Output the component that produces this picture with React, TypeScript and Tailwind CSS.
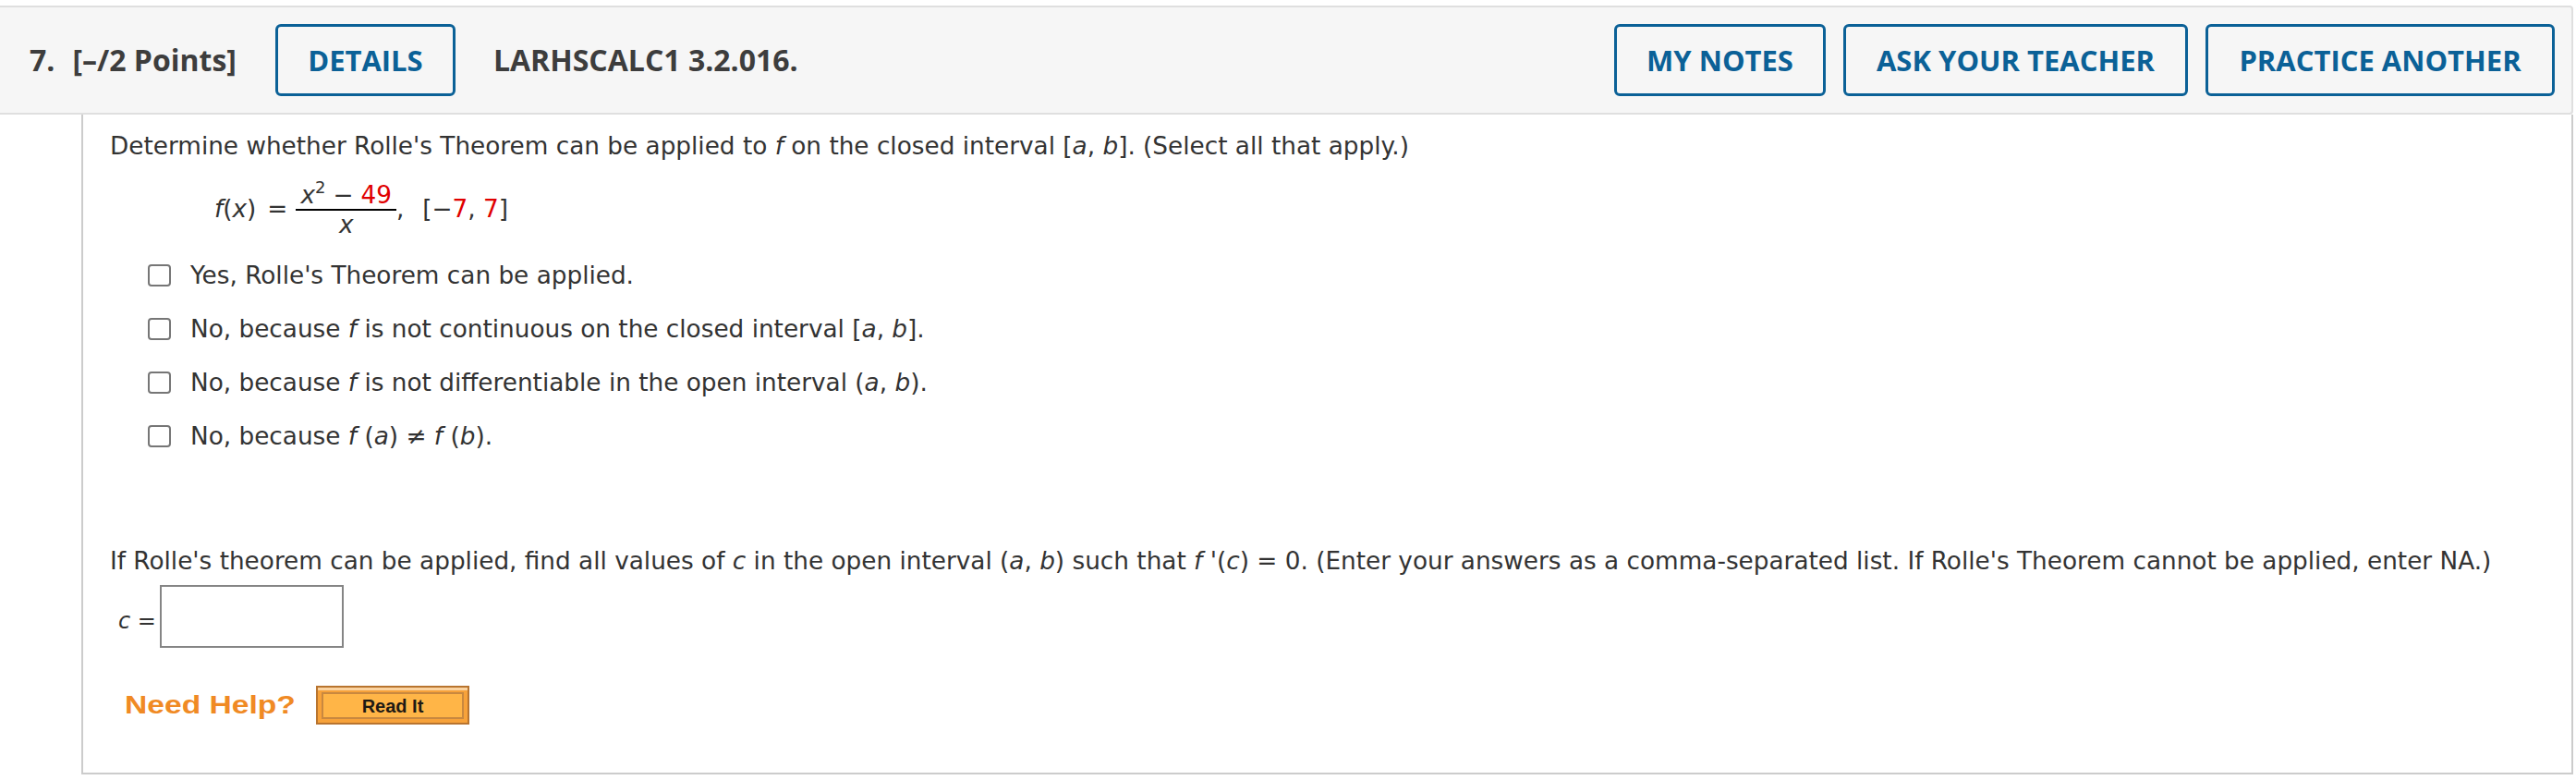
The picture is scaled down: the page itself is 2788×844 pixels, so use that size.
import React from "react";

const body = "font-['DejaVu_Sans',Verdana,sans-serif] text-[26.3px] text-[#333333]";

function Box() {
  return (
    <span className="inline-block w-[25px] h-[24px] border-2 border-[#767676] rounded-[4px] bg-white shrink-0" />
  );
}

function Option({ children }: { children: React.ReactNode }) {
  return (
    <div className="flex items-center h-[34px] ml-[41px]">
      <Box />
      <span className={`${body} leading-[34px] ml-[21px] whitespace-nowrap`}>{children}</span>
    </div>
  );
}

function HBtn({ children, w }: { children: React.ReactNode; w: string }) {
  return (
    <div
      className={`${w} h-[78px] border-[3px] border-[#0b6197] rounded-[6px] flex items-center justify-center text-[#0b6197] font-['Open_Sans',sans-serif] font-bold text-[31px]`}
    >
      {children}
    </div>
  );
}

export default function App() {
  return (
    <div className="w-[2788px] h-[844px] bg-white pt-[6px] overflow-hidden">
      {/* Header */}
      <div className="w-[2785px] h-[118px] bg-[#f6f6f6] border-2 border-l-0 border-[#dfdfdf] rounded-r-[4px] flex items-center">
        <span className="ml-[32px] font-['Open_Sans',sans-serif] font-bold text-[32px] text-[#3d3d3d]">7.</span>
        <span className="ml-[19px] font-['Open_Sans',sans-serif] font-bold text-[32px] text-[#3d3d3d]">[–/2 Points]</span>
        <div className="ml-[42px]">
          <HBtn w="w-[195px]">DETAILS</HBtn>
        </div>
        <span className="ml-[41px] font-['Open_Sans',sans-serif] font-bold text-[32px] text-[#3d3d3d]">LARHSCALC1 3.2.016.</span>
        <div className="ml-auto mr-[18px] flex gap-[19px]">
          <HBtn w="w-[229px]">MY NOTES</HBtn>
          <HBtn w="w-[373px]">ASK YOUR TEACHER</HBtn>
          <HBtn w="w-[378px]">PRACTICE ANOTHER</HBtn>
        </div>
      </div>

      {/* Content */}
      <div className="ml-[88px] w-[2697px] h-[714px] border-2 border-t-0 border-[#cccccc] pl-[29px] pt-[17px] flex flex-col">
        <div className={`${body} leading-[34px] whitespace-nowrap`}>
          Determine whether Rolle's Theorem can be applied to <i>f</i> on the closed interval [<i>a</i>, <i>b</i>]. (Select all that apply.)
        </div>

        {/* Formula */}
        <div className={`${body} mt-[20px] ml-[113px] h-[64px] flex items-center whitespace-nowrap`}>
          <span>
            <i>f</i>(<i>x</i>)
          </span>
          <span className="ml-[12px]">=</span>
          <span className="ml-[9px] inline-flex flex-col items-center">
            <span className="px-[5px] leading-[30px] border-b-2 border-black">
              <i>x</i>
              <sup className="text-[18px] relative top-[-11px]">2</sup>
              <span className="ml-[8px]">−</span>
              <span className="ml-[8px] text-[#e00000]">49</span>
            </span>
            <span className="leading-[30px]">
              <i>x</i>
            </span>
          </span>
          <span>,</span>
          <span className="ml-[20px]">
            [−<span className="text-[#e00000]">7</span>, <span className="text-[#e00000]">7</span>]
          </span>
        </div>

        <div className="mt-[22px] flex flex-col gap-[24px]">
          <Option>Yes, Rolle's Theorem can be applied.</Option>
          <Option>
            No, because <i>f</i> is not continuous on the closed interval [<i>a</i>, <i>b</i>].
          </Option>
          <Option>
            No, because <i>f</i> is not differentiable in the open interval (<i>a</i>, <i>b</i>).
          </Option>
          <Option>
            No, because <i>f</i> (<i>a</i>) ≠ <i>f</i> (<i>b</i>).
          </Option>
        </div>

        <div className={`${body} leading-[34px] mt-[101px] whitespace-nowrap`}>
          If Rolle's theorem can be applied, find all values of <i>c</i> in the open interval (<i>a</i>, <i>b</i>) such that <i>f</i> '(<i>c</i>) = 0. (Enter your answers as a comma-separated list. If Rolle's Theorem cannot be applied, enter NA.)
        </div>

        <div className="mt-[9px] flex items-center ml-[9px]">
          <span className="font-['DejaVu_Sans',Verdana,sans-serif] text-[24px] text-[#333333] mt-[10px]">
            <i>c</i> =
          </span>
          <div className="ml-[4px] w-[199px] h-[68px] border-2 border-[#858585] bg-white" />
        </div>

        <div className="mt-[41px] flex items-center ml-[16px]">
          <span className="w-[207px] inline-block font-['Liberation_Sans',Arial,sans-serif] font-bold text-[28px] text-[#f08a24] origin-left scale-x-[1.2] whitespace-nowrap">
            Need Help?
          </span>
          <div className="w-[166px] h-[42px] bg-[#f7a23a] border-2 border-[#b8742f] p-[4px] pt-[5px] shadow-[inset_0_3px_0_#fbd3a0]">
            <div className="w-full h-full bg-[#ffb547] border-2 border-[#c9883f] flex items-center justify-center">
              <span className="font-['Liberation_Sans',Arial,sans-serif] font-bold text-[20px] text-[#1e1a14] leading-none">Read It</span>
            </div>
          </div>
        </div>
      </div>
    </div>
  );
}
